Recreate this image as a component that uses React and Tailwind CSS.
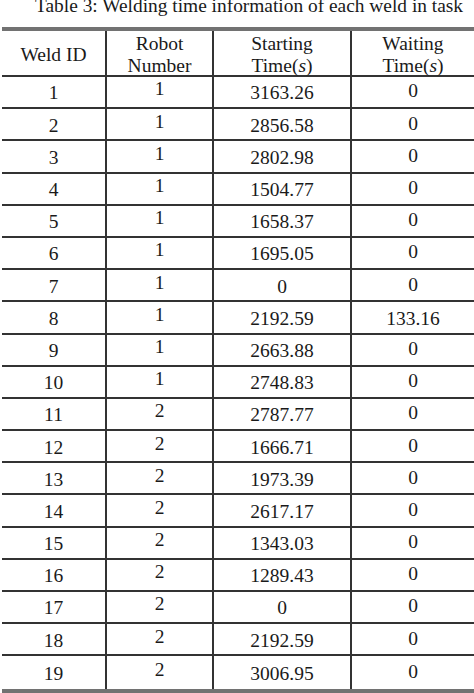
const rows = [
  [1, 1, '3163.26', '0'],
  [2, 1, '2856.58', '0'],
  [3, 1, '2802.98', '0'],
  [4, 1, '1504.77', '0'],
  [5, 1, '1658.37', '0'],
  [6, 1, '1695.05', '0'],
  [7, 1, '0', '0'],
  [8, 1, '2192.59', '133.16'],
  [9, 1, '2663.88', '0'],
  [10, 1, '2748.83', '0'],
  [11, 2, '2787.77', '0'],
  [12, 2, '1666.71', '0'],
  [13, 2, '1973.39', '0'],
  [14, 2, '2617.17', '0'],
  [15, 2, '1343.03', '0'],
  [16, 2, '1289.43', '0'],
  [17, 2, '0', '0'],
  [18, 2, '2192.59', '0'],
  [19, 2, '3006.95', '0'],
];

const cell = 'flex items-center justify-center border-r-2 border-[#333]';

const App = () => {
  return (
    <div
      className="w-[474px] h-[693px] overflow-hidden bg-white text-[#1a1a1a] text-[19.5px]"
      style={{ fontFamily: '"Liberation Serif", "Times New Roman", serif' }}
    >
      {/* Caption, cut off at the top of the crop */}
      <div className="h-[27px] leading-[12px] pl-[35px] whitespace-nowrap text-[19.4px]">
        Table 3: Welding time information of each weld in task
      </div>

      <div className="ml-[2px]">
        <div className="h-[4px] bg-[#727272]" />

        {/* Header */}
        <div className="grid grid-cols-[105px_107px_138px_1fr] h-[46px] border-b-2 border-[#333] leading-[22px]">
          <div className={cell}>
            <span className="translate-y-[2px]">Weld ID</span>
          </div>
          <div className={`${cell} flex-col text-center`}>
            <span className="translate-y-[1.5px]">Robot</span>
            <span className="translate-y-[1.5px]">Number</span>
          </div>
          <div className={`${cell} flex-col text-center`}>
            <span className="translate-y-[1.5px]">Starting</span>
            <span className="translate-y-[1.5px]">
              Time(<i>s</i>)
            </span>
          </div>
          <div className="flex flex-col items-center justify-center text-center">
            <span className="translate-y-[1.5px]">Waiting</span>
            <span className="translate-y-[1.5px]">
              Time(<i>s</i>)
            </span>
          </div>
        </div>

        {/* Body */}
        {rows.map(([id, robot, start, wait], i) => (
          <div
            key={id}
            className={`grid grid-cols-[105px_107px_138px_1fr] h-[32.2px] ${
              i < rows.length - 1 ? 'border-b-2 border-[#333]' : ''
            }`}
          >
            <div className={cell}>
              <span className="translate-y-[1px]">{id}</span>
            </div>
            <div className={cell}>
              <span className="-translate-y-[3px]">{robot}</span>
            </div>
            <div className={cell}>
              <span className="translate-y-[1px]">{start}</span>
            </div>
            <div className="flex items-center justify-center">
              <span className={wait === '0' ? '-translate-y-[1px]' : 'translate-y-[1px]'}>{wait}</span>
            </div>
          </div>
        ))}

        <div className="h-[4px] bg-[#727272]" />
      </div>
    </div>
  );
};

export default App;
